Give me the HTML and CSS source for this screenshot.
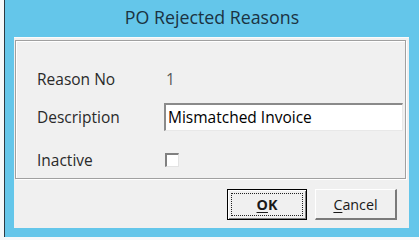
FILE: index.html
```
<!DOCTYPE html>
<html>
<head>
<meta charset="utf-8">
<link rel="stylesheet" href="styles.css">
</head>
<body>
<div class="window">
  <div class="titlebar">PO Rejected Reasons</div>
  <div class="client">
    <div class="panel">
      <div class="row row1">
        <span class="label">Reason No</span>
        <span class="value">1</span>
      </div>
      <div class="row row2">
        <span class="label">Description</span>
        <div class="input">Mismatched Invoice</div>
      </div>
      <div class="row row3">
        <span class="label">Inactive</span>
        <span class="check"></span>
      </div>
    </div>
    <div class="buttons">
      <div class="btn btn-default"><div class="focus"><span class="ok"><u>O</u>K</span></div></div>
      <div class="btn"><span><u>C</u>ancel</span></div>
    </div>
  </div>
</div>
</body>
</html>
```
FILE: styles.css
```
html, body {
  margin: 0;
  padding: 0;
  background: #f4f8fa;
  font-family: "Open Sans", "Noto Sans", sans-serif;
}
.window {
  margin-left: 4px;
  width: 415px;
  height: 237px;
  border-left: 1px solid #2a3a44;
  background: #64c6ea;
  box-sizing: border-box;
  padding: 0 10px 0 9px;
  display: flex;
  flex-direction: column;
}
.titlebar {
  height: 37px;
  line-height: 35px;
  text-align: center;
  font-size: 17.8px;
  color: #1b3342;
  padding-left: 1px;
}
.client {
  height: 191px;
  background: #f0f0f0;
  border-top: 1px solid #fbfbfb;
  box-sizing: border-box;
  padding: 2px 0 0 1px;
  display: flex;
  flex-direction: column;
}
.panel {
  width: 391px;
  height: 139px;
  border: 1px solid #a0a0a0;
  box-shadow: 1px 1px 0 #ffffff, inset 1px 1px 0 #ffffff;
  box-sizing: border-box;
  padding: 0 2px 0 21px;
  display: flex;
  flex-direction: column;
  font-size: 15.5px;
  color: #2a2a2a;
}
.row {
  display: flex;
  align-items: center;
  height: 28px;
}
.row1 { margin-top: 24px; }
.row2 { margin-top: 10px; }
.row3 { margin-top: 15px; }
.label {
  width: 127px;
  flex: none;
}
.value {
  padding-left: 2px;
  color: #555;
}
.input {
  width: 239px;
  height: 28px;
  box-sizing: border-box;
  background: #ffffff;
  border-top: 2px solid #8a8a8a;
  border-left: 2px solid #8a8a8a;
  border-right: 1px solid #e8e8e8;
  border-bottom: 1px solid #e8e8e8;
  padding-left: 2px;
  font-size: 15.5px;
  line-height: 24px;
  color: #000;
}
.check {
  width: 14px;
  height: 14px;
  margin-left: 1px;
  box-sizing: border-box;
  background: #fff;
  border-top: 2px solid #808080;
  border-left: 2px solid #808080;
  border-right: 1px solid #e3e3e3;
  border-bottom: 1px solid #e3e3e3;
}
.buttons {
  display: flex;
  justify-content: flex-end;
  gap: 8px;
  margin-top: 10px;
  padding-right: 12px;
}
.btn {
  width: 82px;
  height: 31px;
  box-sizing: border-box;
  background: #f0f0f0;
  border-top: 1px solid #ffffff;
  border-left: 1px solid #ffffff;
  border-right: 2px solid #7a7a7a;
  border-bottom: 2px solid #7a7a7a;
  display: flex;
  align-items: center;
  justify-content: center;
  font-size: 14.3px;
  color: #1a1a1a;
}
.btn-default {
  width: 80px;
  border: 1px solid #000;
  box-shadow: inset 1px 1px 0 #fff, inset -1px -1px 0 #808080;
  padding: 3px;
}
.focus {
  width: 100%;
  height: 100%;
  border: 1px dotted #222;
  box-sizing: border-box;
  display: flex;
  align-items: center;
  justify-content: center;
}
.ok {
  font-weight: bold;
}
u {
  text-decoration-thickness: 1px;
  text-underline-offset: 2px;
}
```
